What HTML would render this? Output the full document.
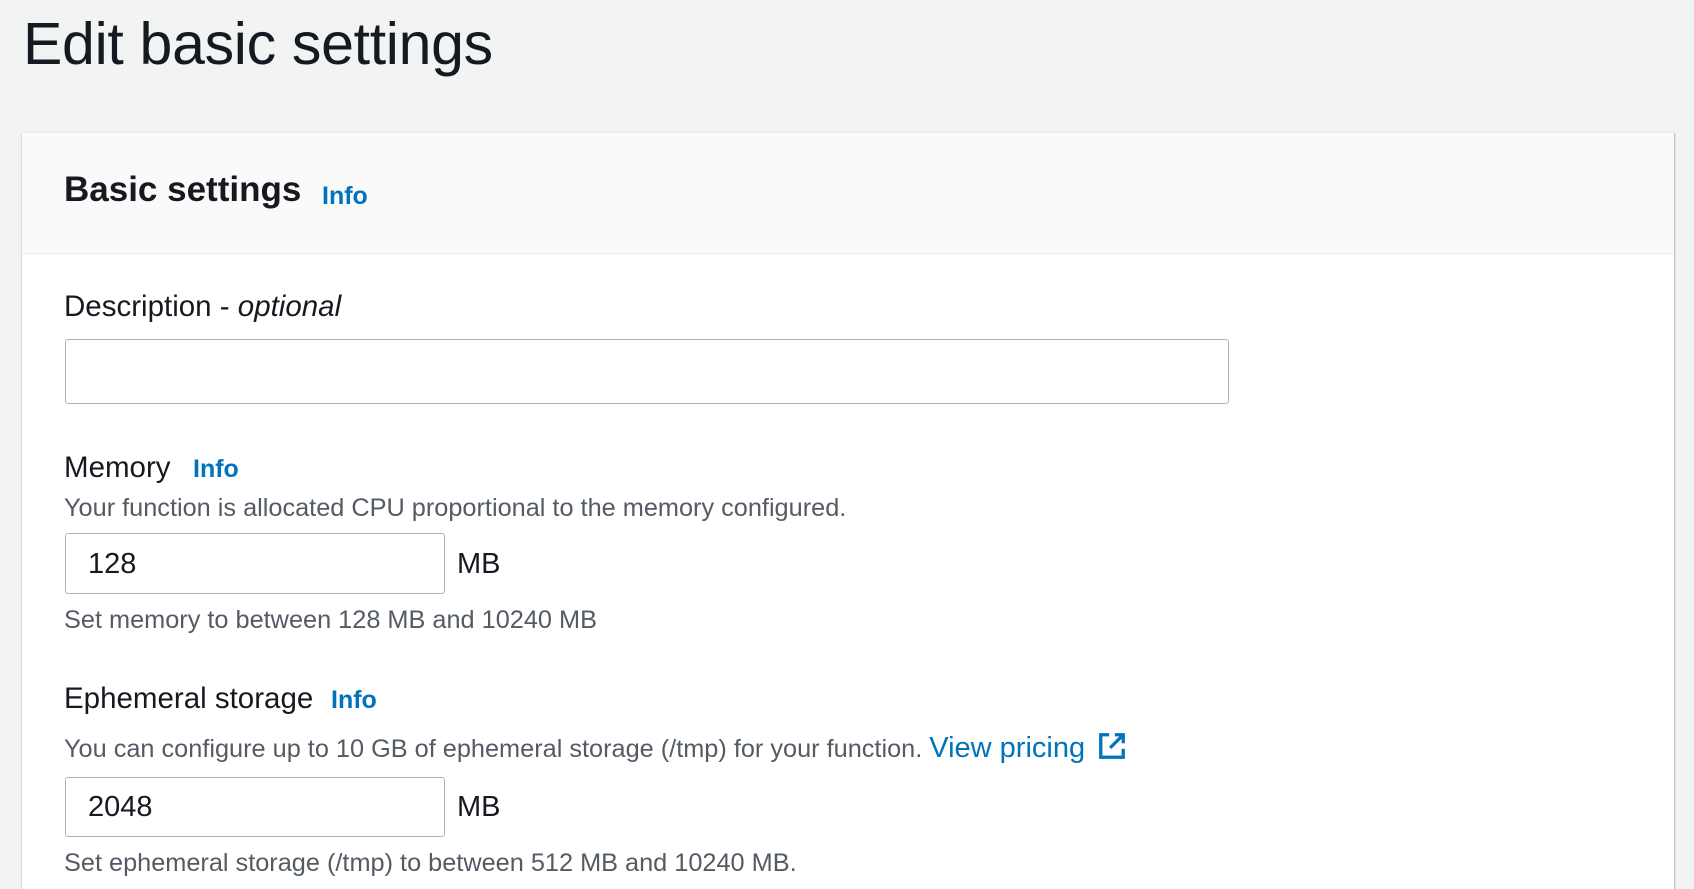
<!DOCTYPE html>
<html style="width:1694px;height:889px;overflow:hidden"><head><meta charset="utf-8"><style>
*{margin:0;padding:0;box-sizing:border-box}
body{width:1694px;height:889px;overflow:hidden;background:#f2f3f3;font-family:"Liberation Sans",sans-serif;color:#16191f;position:relative}
.a{position:absolute;white-space:nowrap}
h1{position:absolute;left:23px;top:10px;font-size:59px;font-weight:400;letter-spacing:-0.3px;color:#16191f}
.card{position:absolute;left:22px;top:132px;width:1652px;height:757px;background:#fff;box-shadow:0 1px 2px rgba(0,28,36,.3),1px 1px 1px rgba(0,28,36,.15);border-top:1px solid #eaeded}
.hdr{position:absolute;left:0;top:0;width:100%;height:121px;background:#fafafa;border-bottom:1px solid #eaeded}
.info{color:#0073bb;font-weight:700}
.lab{font-size:29.5px;color:#16191f}
.help{font-size:25.3px;color:#545b64}
.inp{position:absolute;border:1.5px solid #aab7b8;border-radius:3px;background:#fff}
.val{font-size:29px;color:#16191f}
</style></head><body>
<h1>Edit basic settings</h1>
<div class="card"><div class="hdr"></div></div>
<div class="a" style="left:64px;top:170px;font-size:35px;font-weight:700">Basic settings</div>
<div class="a info" style="left:322px;top:182px;font-size:25px">Info</div>

<div class="a lab" style="left:64px;top:290px">Description - <i>optional</i></div>
<div class="inp" style="left:65px;top:339px;width:1164px;height:65px"></div>

<div class="a lab" style="left:64px;top:451px">Memory</div>
<div class="a info" style="left:193px;top:455px;font-size:25px">Info</div>
<div class="a help" style="left:64px;top:494px">Your function is allocated CPU proportional to the memory configured.</div>
<div class="inp" style="left:65px;top:533px;width:380px;height:61px"></div>
<div class="a val" style="left:88px;top:548px">128</div>
<div class="a val" style="left:457px;top:548px">MB</div>
<div class="a help" style="left:64px;top:606px">Set memory to between 128 MB and 10240 MB</div>

<div class="a lab" style="left:64px;top:682px">Ephemeral storage</div>
<div class="a info" style="left:331px;top:686px;font-size:25px">Info</div>
<div class="a help" style="left:64px;top:731px">You can configure up to 10 GB of ephemeral storage (/tmp) for your function. <span style="color:#0073bb;font-size:29px">View pricing</span><svg style="margin-left:12px;vertical-align:-4px" width="30" height="30" viewBox="0 0 32 32" fill="none" stroke="#0073bb" stroke-width="3.5"><path d="M13 4H4v24h24v-9"/><path d="M19 4h9v9M28 4L14 18"/></svg></div>
<div class="inp" style="left:65px;top:777px;width:380px;height:60px"></div>
<div class="a val" style="left:88px;top:791px">2048</div>
<div class="a val" style="left:457px;top:791px">MB</div>
<div class="a help" style="left:64px;top:849px">Set ephemeral storage (/tmp) to between 512 MB and 10240 MB.</div>
</body></html>
